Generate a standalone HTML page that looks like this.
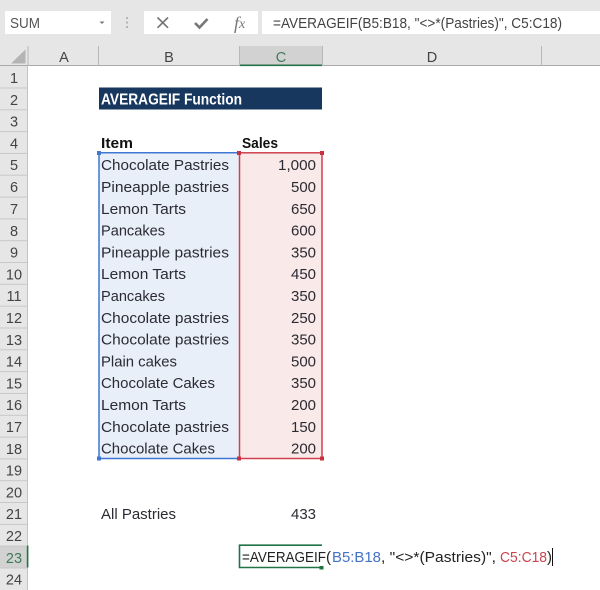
<!DOCTYPE html>
<html><head><meta charset="utf-8"><style>
html,body{margin:0;padding:0;width:600px;height:590px;overflow:hidden;background:#fff}
svg{display:block}
text{font-family:"Liberation Sans",sans-serif}
.t{font-size:15px;fill:#2b2b33}
.h{font-size:14.500px;fill:#444}
</style></head><body>
<svg width="600" height="590" viewBox="0 0 600 590" xmlns="http://www.w3.org/2000/svg">
<g style="filter:blur(.35px)">
<rect width="600" height="590" fill="#fff"/>
<!-- top chrome -->
<rect width="600" height="66" fill="#e6e6e6"/>
<rect x="0" y="66" width="28" height="524" fill="#e6e6e6"/>
<rect x="5" y="11" width="106" height="23" fill="#fff"/>
<rect x="144" y="11" width="114" height="23" fill="#fff"/>
<rect x="262" y="11" width="338" height="23" fill="#fff"/>
<text x="10" y="28" font-size="15" fill="#555" textLength="30" lengthAdjust="spacingAndGlyphs">SUM</text>
<path d="M99.500 21.500h5l-2.500 2.500z" fill="#777"/>
<g fill="#b5b5b5"><rect x="126" y="17" width="2" height="2"/><rect x="126" y="21.500" width="2" height="2"/><rect x="126" y="26" width="2" height="2"/></g>
<path d="M157.500 17.500L168 27.800M168 17.500L157.500 27.800" stroke="#777" stroke-width="1.700" fill="none"/>
<path d="M195 23l4.500 4.500 8-8.500" stroke="#777" stroke-width="2.600" fill="none"/>
<text x="234" y="29" font-style="italic" fill="#777" font-size="18" style="font-family:'Liberation Serif',serif">f<tspan font-size="14" dy="-1">x</tspan></text>
<text x="273" y="28" font-size="14.500" fill="#444" textLength="289" lengthAdjust="spacingAndGlyphs">=AVERAGEIF(B5:B18, "&lt;&gt;*(Pastries)", C5:C18)</text>
<!-- column headers -->
<path d="M25.500 49.500V63.500H11z" fill="#b4b4b4"/>
<rect x="239" y="46" width="83" height="19" fill="#d2d2d2"/>
<rect x="0" y="65" width="600" height="1" fill="#a9a9a9"/>
<rect x="239" y="64.500" width="83" height="1.600" fill="#217346"/>
<g fill="#b8b8b8"><rect x="27.500" y="46" width="1" height="20"/><rect x="98" y="46" width="1" height="20"/><rect x="239" y="46" width="1" height="20"/><rect x="322" y="46" width="1" height="20"/><rect x="541" y="46" width="1" height="20"/></g>
<text x="64" y="62" class="h" text-anchor="middle">A</text>
<text x="169" y="62" class="h" text-anchor="middle">B</text>
<text x="281" y="62" class="h" text-anchor="middle" style="fill:#3f7a5c">C</text>
<text x="432" y="62" class="h" text-anchor="middle">D</text>
<!-- row headers -->
<rect x="0" y="545.500" width="27" height="22" fill="#d2d2d2"/>
<rect x="27" y="66" width="1" height="524" fill="#c4c4c4"/>
<rect x="26.800" y="545.500" width="1.600" height="22" fill="#217346"/>
<g fill="#c8c8c8">
<rect y="87.500" width="27" height="1"/><rect y="109.300" width="27" height="1"/><rect y="131.100" width="27" height="1"/><rect y="152.900" width="27" height="1"/><rect y="174.700" width="27" height="1"/><rect y="196.600" width="27" height="1"/><rect y="218.400" width="27" height="1"/><rect y="240.200" width="27" height="1"/><rect y="262" width="27" height="1"/><rect y="283.800" width="27" height="1"/><rect y="305.700" width="27" height="1"/><rect y="327.500" width="27" height="1"/><rect y="349.300" width="27" height="1"/><rect y="371.100" width="27" height="1"/><rect y="392.900" width="27" height="1"/><rect y="414.800" width="27" height="1"/><rect y="436.600" width="27" height="1"/><rect y="458.400" width="27" height="1"/><rect y="480.200" width="27" height="1"/><rect y="502" width="27" height="1"/><rect y="523.900" width="27" height="1"/><rect y="545.700" width="27" height="1"/><rect y="567.500" width="27" height="1"/>
</g>
<text x="14" y="83" class="h" text-anchor="middle">1</text>
<text x="14" y="105" class="h" text-anchor="middle">2</text>
<text x="14" y="126.500" class="h" text-anchor="middle">3</text>
<text x="14" y="148.500" class="h" text-anchor="middle">4</text>
<text x="14" y="170" class="h" text-anchor="middle">5</text>
<text x="14" y="192" class="h" text-anchor="middle">6</text>
<text x="14" y="214" class="h" text-anchor="middle">7</text>
<text x="14" y="236" class="h" text-anchor="middle">8</text>
<text x="14" y="257.500" class="h" text-anchor="middle">9</text>
<text x="14" y="279.500" class="h" text-anchor="middle">10</text>
<text x="14" y="301" class="h" text-anchor="middle">11</text>
<text x="14" y="323" class="h" text-anchor="middle">12</text>
<text x="14" y="345" class="h" text-anchor="middle">13</text>
<text x="14" y="366.500" class="h" text-anchor="middle">14</text>
<text x="14" y="388.500" class="h" text-anchor="middle">15</text>
<text x="14" y="410" class="h" text-anchor="middle">16</text>
<text x="14" y="432" class="h" text-anchor="middle">17</text>
<text x="14" y="454" class="h" text-anchor="middle">18</text>
<text x="14" y="475.500" class="h" text-anchor="middle">19</text>
<text x="14" y="497.500" class="h" text-anchor="middle">20</text>
<text x="14" y="519" class="h" text-anchor="middle">21</text>
<text x="14" y="541" class="h" text-anchor="middle">22</text>
<text x="14" y="563" style="fill:#3f7a5c" class="h" text-anchor="middle">23</text>
<text x="14" y="584.500" class="h" text-anchor="middle">24</text>
<!-- title -->
<rect x="99" y="87.500" width="223" height="22" fill="#17375e"/>
<text x="101" y="104.500" font-size="15.500" font-weight="bold" fill="#fff" textLength="141" lengthAdjust="spacingAndGlyphs">AVERAGEIF Function</text>
<!-- headers -->
<text x="101" y="148" font-size="15" font-weight="bold" fill="#111" textLength="32" lengthAdjust="spacingAndGlyphs">Item</text>
<text x="242" y="148" font-size="15" font-weight="bold" fill="#111" textLength="36" lengthAdjust="spacingAndGlyphs">Sales</text>
<!-- ranges -->
<rect x="99" y="153" width="140" height="305.500" fill="#e8eff9"/>
<rect x="239" y="153" width="83" height="305.500" fill="#f9e9e9"/>
<path d="M239 152.800H99V458.500H239" fill="none" stroke="#3f77d2" stroke-width="1.500"/>
<rect x="239.500" y="152.800" width="82.500" height="305.700" fill="none" stroke="#d0404e" stroke-width="1.500"/>
<g fill="#3f77d2"><rect x="97" y="151" width="4" height="4"/><rect x="97" y="456.500" width="4" height="4"/></g>
<g fill="#c8323f"><rect x="237" y="151" width="4" height="4"/><rect x="320" y="151" width="4" height="4"/><rect x="237" y="456.500" width="4" height="4"/><rect x="320" y="456.500" width="4" height="4"/></g>
<!-- item labels -->
<text class="t" x="101" y="170" textLength="128" lengthAdjust="spacingAndGlyphs">Chocolate Pastries</text>
<text class="t" x="101" y="192" textLength="128" lengthAdjust="spacingAndGlyphs">Pineapple pastries</text>
<text class="t" x="101" y="214" textLength="85" lengthAdjust="spacingAndGlyphs">Lemon Tarts</text>
<text class="t" x="101" y="235.500" textLength="64" lengthAdjust="spacingAndGlyphs">Pancakes</text>
<text class="t" x="101" y="257.500" textLength="128" lengthAdjust="spacingAndGlyphs">Pineapple pastries</text>
<text class="t" x="101" y="279" textLength="85" lengthAdjust="spacingAndGlyphs">Lemon Tarts</text>
<text class="t" x="101" y="301" textLength="64" lengthAdjust="spacingAndGlyphs">Pancakes</text>
<text class="t" x="101" y="323" textLength="128" lengthAdjust="spacingAndGlyphs">Chocolate pastries</text>
<text class="t" x="101" y="344.500" textLength="128" lengthAdjust="spacingAndGlyphs">Chocolate pastries</text>
<text class="t" x="101" y="366.500" textLength="76" lengthAdjust="spacingAndGlyphs">Plain cakes</text>
<text class="t" x="101" y="388" textLength="114" lengthAdjust="spacingAndGlyphs">Chocolate Cakes</text>
<text class="t" x="101" y="410" textLength="85" lengthAdjust="spacingAndGlyphs">Lemon Tarts</text>
<text class="t" x="101" y="432" textLength="128" lengthAdjust="spacingAndGlyphs">Chocolate pastries</text>
<text class="t" x="101" y="453.500" textLength="114" lengthAdjust="spacingAndGlyphs">Chocolate Cakes</text>
<!-- values -->
<text class="t" x="278" y="170" textLength="38" lengthAdjust="spacingAndGlyphs">1,000</text>
<text class="t" x="291" y="192" textLength="25" lengthAdjust="spacingAndGlyphs">500</text>
<text class="t" x="291" y="214" textLength="25" lengthAdjust="spacingAndGlyphs">650</text>
<text class="t" x="291" y="235.500" textLength="25" lengthAdjust="spacingAndGlyphs">600</text>
<text class="t" x="291" y="257.500" textLength="25" lengthAdjust="spacingAndGlyphs">350</text>
<text class="t" x="291" y="279" textLength="25" lengthAdjust="spacingAndGlyphs">450</text>
<text class="t" x="291" y="301" textLength="25" lengthAdjust="spacingAndGlyphs">350</text>
<text class="t" x="291" y="323" textLength="25" lengthAdjust="spacingAndGlyphs">250</text>
<text class="t" x="291" y="344.500" textLength="25" lengthAdjust="spacingAndGlyphs">350</text>
<text class="t" x="291" y="366.500" textLength="25" lengthAdjust="spacingAndGlyphs">500</text>
<text class="t" x="291" y="388" textLength="25" lengthAdjust="spacingAndGlyphs">350</text>
<text class="t" x="291" y="410" textLength="25" lengthAdjust="spacingAndGlyphs">200</text>
<text class="t" x="291" y="432" textLength="25" lengthAdjust="spacingAndGlyphs">150</text>
<text class="t" x="291" y="453.500" textLength="25" lengthAdjust="spacingAndGlyphs">200</text>
<text class="t" x="101" y="519" textLength="75" lengthAdjust="spacingAndGlyphs">All Pastries</text>
<text class="t" x="291" y="519" textLength="25" lengthAdjust="spacingAndGlyphs">433</text>
<!-- active cell -->
<path d="M322 545.200H239.500V567.500H322" fill="none" stroke="#217346" stroke-width="1.600"/>
<rect x="319.500" y="566" width="4" height="3.500" fill="#217346"/>
<text x="242" y="562" font-size="15" fill="#222" textLength="84" lengthAdjust="spacingAndGlyphs">=AVERAGEIF</text>
<text x="326" y="562" font-size="15" fill="#222" textLength="5" lengthAdjust="spacingAndGlyphs">(</text>
<text x="332" y="562" font-size="15" fill="#4472c4" textLength="49" lengthAdjust="spacingAndGlyphs">B5:B18</text>
<text x="381" y="562" font-size="15" fill="#222" textLength="115" lengthAdjust="spacingAndGlyphs">, "&lt;&gt;*(Pastries)",</text>
<text x="500" y="562" font-size="15" fill="#c8454f" textLength="47" lengthAdjust="spacingAndGlyphs">C5:C18</text>
<text x="547" y="562" font-size="15" fill="#222" textLength="5" lengthAdjust="spacingAndGlyphs">)</text>
<rect x="552" y="548" width="1" height="18" fill="#111"/>
</g>
</svg>
</body></html>
